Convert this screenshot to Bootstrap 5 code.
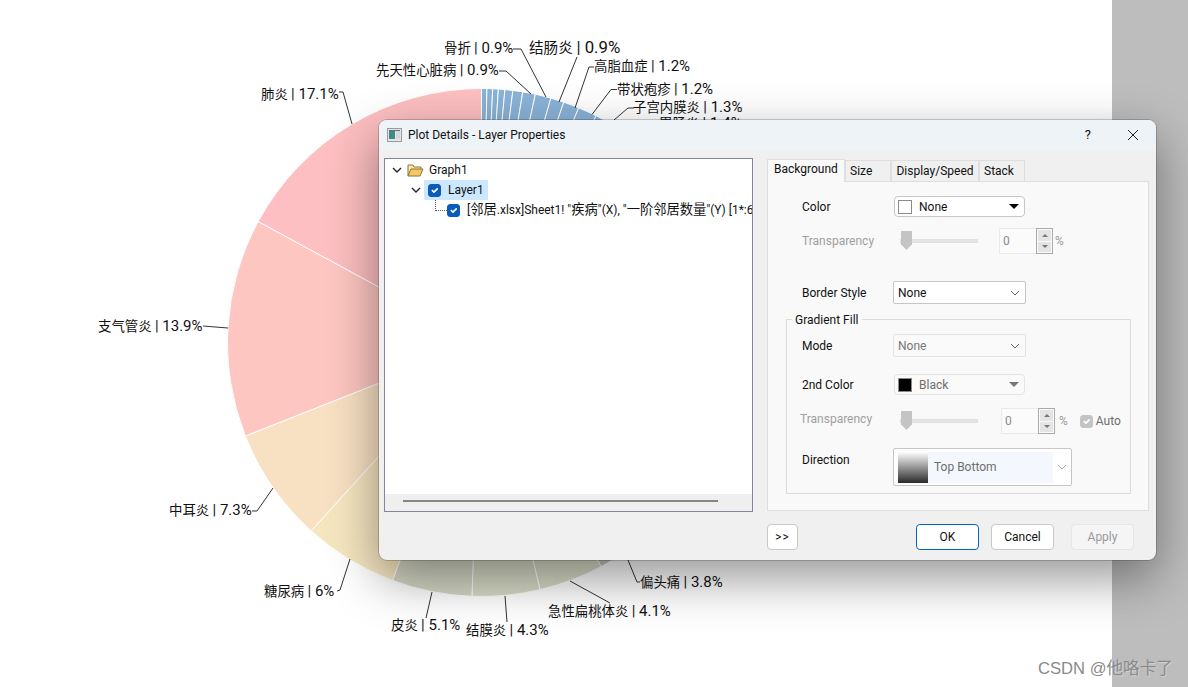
<!DOCTYPE html>
<html lang="zh-CN">
<head>
<meta charset="utf-8">
<title>Plot Details</title>
<link href="https://cdn.jsdelivr.net/npm/bootstrap@5.3.0/dist/css/bootstrap.min.css" rel="stylesheet">
<style>
html,body{height:687px;overflow:hidden;background:#fff}
body{font-family:Roboto,"Noto Sans CJK SC",sans-serif;font-size:12px;color:#111}
.stage{position:relative;width:1188px;height:687px;overflow:hidden}
.canvas{width:1112px;height:687px;flex:none}
.sideband{flex:1 1 auto;background:#bdbdbd}
.lbl{font-family:Roboto,"Noto Sans CJK SC",sans-serif;font-size:13.4px;fill:#111}
.lbl-big{font-size:14.6px}
.num{font-size:15px}
.num-big{font-size:16.8px}
.leader{stroke:#333;stroke-width:1;fill:none}
.watermark{position:absolute;left:1038px;top:659px;font-size:16.6px;line-height:20px;color:#8a8a8a;text-shadow:1px 1px 1px rgba(255,255,255,.35);font-family:"Liberation Sans","Noto Sans CJK SC",sans-serif}
.dlg{position:absolute;left:379px;top:120px;width:777px;height:440px;background:#f0f0f0;border-radius:8px;box-shadow:0 18px 50px rgba(0,0,0,.42),0 0 0 1px rgba(0,0,0,.18);overflow:hidden;display:flex;flex-direction:column}
.dlg-title{height:30px;background:#eef3f8;padding:0 17px 0 8px;flex:none}
.title-txt{font-size:12px;margin-left:6px}
.dlg-q{font-size:13px;margin-right:36px}
.dlg-body{padding:8px 7px 0 5px;gap:14px;height:361px;flex:none}
.tree{width:369px;height:354px;border:1px solid #84849a;background:#fff;overflow:hidden;flex:none}
.tree-items{padding-top:1px;height:335px}
.tree-row{height:20px;white-space:nowrap}
.r1{padding-left:7px}
.r2{padding-left:26px}
.r3{padding-left:50px}
.twist{width:10px;height:10px;flex:none}
.folder{width:17px;height:14px;margin-left:5px;flex:none}
.t-txt{margin-left:5px}
.sel{background:#cce8ff;height:20px;padding:0 4px 0 4px;margin-left:3px;border-radius:1px}
.dots{width:12px;height:11px;border-left:1px dotted #555;border-bottom:1px dotted #555;margin-top:-10px;flex:none}
.form-check-input.tk{width:13px;height:13px;margin:0;border-radius:3px;background-color:#0a5cb8;border-color:#0a5cb8;opacity:1;flex:none}
.t-lead{margin-left:7px}
.cjk{font-size:13.300px}
.tree-bar{height:17px;background:#efefef;padding:6px 34px 0 18px}
.tree-thumb{height:2px;background:#868686}
.tabs-col{width:382px;flex:none;padding-top:0}
.tabbar{border:0;gap:0;height:23px;align-items:flex-end;padding-left:0;flex-wrap:nowrap}
.tabbar .nav-link{font-size:12px;line-height:14px;color:#111;border:1px solid #dedede;border-bottom:0;border-radius:0;background:#f0f0f0;height:21px;padding:3px 4px 0;margin:0;white-space:nowrap}
.tabbar .nav-link.active{height:23px;background:#f9f9f9;padding:2px 6px 0;border-color:#dedede;color:#111;margin-bottom:-1px;position:relative}
.tw1{width:78px}.tw2{width:46px}.tw3{width:88px;text-align:center}.tw4{width:46px}
.tab-panel{height:330px;background:#f9f9f9;border:1px solid #dedede;padding:14px 0 0 0}
.frow{display:flex;align-items:center}
.flabel{width:126px;flex:none;padding-left:34px}
.flabel-in{width:107px;flex:none;padding-left:15px}
.off{color:#a0a0a0}
.combo{width:131px;height:21px;border:1px solid #c6c6c6;border-radius:4px;background:#fff;padding:0 3px;flex:none}
.combo-off{background:#fafafa;border-color:#e4e4e4;color:#6e6e6e}
.swatch{width:14px;height:14px;border:1px solid #8a8a8a;background:#fff;flex:none;margin-right:7px}
.sw-black{background:#000}
.caret-d{width:0;height:0;border-left:5px solid transparent;border-right:5px solid transparent;border-top:5px solid #000;margin-left:auto;margin-right:2px}
.caret-off{border-top-color:#777}
.slidebox{width:78px;height:20px;position:relative;flex:none;margin-left:6px;display:flex;align-items:center}
.s-track{height:4px;width:100%;background:#e4e6e4;border:1px solid #e0e0e0}
.s-thumb{position:absolute;left:1px;top:0;width:11px;height:19px;background:#c4c4c4;clip-path:polygon(0 0,100% 0,100% 70%,50% 100%,0 70%)}
.spin{width:54px;height:26px;border:1px solid #eaeaea;background:#fbfbfb;flex:none;margin-left:21px;padding-left:3px;color:#8b8b8b;display:flex;align-items:center;justify-content:space-between;padding-right:0}
.spin-btns{width:17px;height:26px;border:1px solid #aaa;display:flex;flex-direction:column;gap:1px;padding:1px;margin-right:-1px}
.spin-btns span{flex:1;background:#e4e4e4;display:flex;align-items:center;justify-content:center}
.up{width:0;height:0;border-left:3px solid transparent;border-right:3px solid transparent;border-bottom:3px solid #777}
.dn{width:0;height:0;border-left:3px solid transparent;border-right:3px solid transparent;border-top:3px solid #777}
.pct{margin-left:2px;color:#9a9a9a;font-size:12px}
.mt-a{margin-top:11px}
.mt-b{margin-top:27px}
.sel-d{width:133px;height:23px;min-height:23px;font-size:12px;line-height:14px;padding:0 4px;border:1px solid #c6c6c6;border-radius:2px;color:#111;background-color:#fff;margin-left:-1px;background-position:right 4px center;background-size:12px 10px;background-image:url("data:image/svg+xml,%3csvg xmlns='http://www.w3.org/2000/svg' viewBox='0 0 12 10'%3e%3cpath fill='none' stroke='%23666' d='M2 3l4 4 4-4'/%3e%3c/svg%3e")}
.sel-d:disabled{background-color:#fafafa;border-color:#e4e4e4;color:#777}
.gbox{position:relative;margin:15px 0 0 18px;width:345px;height:175px;border:1px solid #dcdcdc;padding-top:14px}
.gleg{position:absolute;left:5px;top:-7px;background:#f9f9f9;padding:0 3px;line-height:15px}
.mt-c{margin-top:17px}
.mt-d{margin-top:13px}
.mt-e{margin-top:14px}
.gslide{margin-left:6px}
.in-tr{width:107px;flex:none;padding-left:13px;padding-bottom:5px}
.in-spin{margin-left:23px}
.in-pct{margin-left:4px;margin-right:12px}
.form-check-input.tk-off{width:13px;height:13px;margin:0 3px 0 0;border-radius:3px;background-color:#c4c4c4;border-color:#c4c4c4;opacity:1;flex:none}
.auto-t{color:#6e6e6e}
.dirbox{width:179px;height:38px;border:1px solid #c6c6c6;border-radius:2px;background:#fff;padding:3px 0 3px 4px;margin-left:-1px;flex:none;color:#6e6e6e}
.grad{width:30px;height:31px;background:linear-gradient(#fff,#2a2a2a);flex:none}
.dir-t{flex:1;background:#f4f7fd;height:31px;padding-left:6px;display:flex;align-items:center;margin-right:0}
.dir-c{width:18px;height:10px;flex:none}
.dir-lab{align-self:flex-start;padding-top:3px}
.dlg-foot{padding:13px 22px 0 388px;flex:none}
.bt{font-size:12px;line-height:14px;height:26px;width:63px;padding:0;border-radius:4px;background:#fff;border:1px solid #c8c8c8;color:#111;display:inline-flex;align-items:center;justify-content:center}
.bt-more{width:31px;letter-spacing:1px}
.bt-ok{border-color:#0067c0}
.bt-gap{margin-left:auto}
.bt-can{margin-left:12px}
.btn.bt-app:disabled{margin-left:17px;background:#f5f5f5;border-color:#e6e6e6;color:#9a9a9a;opacity:1}
</style>
</head>
<body>
<div class="stage d-flex">
  <svg class="canvas" viewBox="0 0 1112 687" xmlns="http://www.w3.org/2000/svg">
    <g id="pie" stroke="#fff" stroke-width="1"></g>
    <g>
      <path class="leader" d="M339 92h4l9 32"/><text class="lbl" x="261" y="99">肺炎 <tspan class="num">| 17.1%</tspan></text>
      <path class="leader" d="M203 326l25 2"/><text class="lbl" x="98" y="331">支气管炎 <tspan class="num">| 13.9%</tspan></text>
      <path class="leader" d="M252 511h5l16-23"/><text class="lbl" x="169" y="515">中耳炎 <tspan class="num">| 7.3%</tspan></text>
      <path class="leader" d="M337 591l3-1 10-31"/><text class="lbl" x="264" y="596">糖尿病 <tspan class="num">| 6%</tspan></text>
      <path class="leader" d="M426 618l6-26"/><text class="lbl" x="391" y="630">皮炎 <tspan class="num">| 5.1%</tspan></text>
      <path class="leader" d="M507 622l-2-26"/><text class="lbl" x="466" y="635">结膜炎 <tspan class="num">| 4.3%</tspan></text>
      <path class="leader" d="M610 603l-40-22"/><text class="lbl" x="548" y="616">急性扁桃体炎 <tspan class="num">| 4.1%</tspan></text>
      <path class="leader" d="M640 582h-3l-9-22"/><text class="lbl" x="640" y="587">偏头痛 <tspan class="num">| 3.8%</tspan></text>
      <path class="leader" d="M513 49h8l25 48"/><text class="lbl" x="444" y="53">骨折 <tspan class="num">| 0.9%</tspan></text>
      <path class="leader" d="M577 57l-18 45"/><text class="lbl lbl-big" x="529" y="53">结肠炎 <tspan class="num-big">| 0.9%</tspan></text>
      <path class="leader" d="M499 71h7l25 23"/><text class="lbl" x="376" y="75">先天性心脏病 <tspan class="num">| 0.9%</tspan></text>
      <path class="leader" d="M594 67h-5l-14 41"/><text class="lbl" x="594" y="71">高脂血症 <tspan class="num">| 1.2%</tspan></text>
      <path class="leader" d="M617 89.500h-6l-19 25"/><text class="lbl" x="617" y="94">带状疱疹 <tspan class="num">| 1.2%</tspan></text>
      <path class="leader" d="M634 108h-6l-14 12"/><text class="lbl" x="633" y="112">子宫内膜炎 <tspan class="num">| 1.3%</tspan></text>
      <text class="lbl" x="659" y="128">胃肠炎 <tspan class="num">| 1.4%</tspan></text>
    </g>
  </svg>
  <div class="sideband"></div>

  <div class="dlg">
    <div class="dlg-title d-flex align-items-center">
      <svg width="15" height="14" viewBox="0 0 15 14"><rect x=".5" y=".5" width="14" height="13" fill="#e6e6e6" stroke="#9a9a9a"/><rect x="2" y="3" width="6" height="8" fill="#3e8a84"/><rect x="9" y="3" width="4" height="8" fill="#d6d6d6"/><rect x="2" y="2" width="11" height="1" fill="#607080"/></svg>
      <span class="title-txt">Plot Details - Layer Properties</span>
      <span class="dlg-q ms-auto">?</span>
      <svg width="12" height="12" viewBox="0 0 12 12"><path d="M1 1l10 10M11 1L1 11" stroke="#222" fill="none"/></svg>
    </div>
    <div class="dlg-body d-flex">
      <div class="tree d-flex flex-column">
        <div class="tree-items">
          <div class="tree-row r1 d-flex align-items-center">
            <svg class="twist" viewBox="0 0 10 10"><path d="M1 3l4 4 4-4" fill="none" stroke="#222" stroke-width="1.400"/></svg>
            <svg class="folder" viewBox="0 0 17 14"><path d="M1 13V2h5l1 2h7v2" fill="#fbe9a8" stroke="#8a7440"/><path d="M1 13l3-7h12l-3 7z" fill="#f6c95c" stroke="#8a7440"/></svg>
            <span class="t-txt">Graph1</span>
          </div>
          <div class="tree-row r2 d-flex align-items-center">
            <svg class="twist" viewBox="0 0 10 10"><path d="M1 3l4 4 4-4" fill="none" stroke="#222" stroke-width="1.400"/></svg>
            <div class="sel d-flex align-items-center">
              <input class="form-check-input tk" type="checkbox" checked aria-label="Layer1"><span class="t-lead">Layer1</span>
            </div>
          </div>
          <div class="tree-row r3 d-flex align-items-center">
            <div class="dots"></div>
            <input class="form-check-input tk" type="checkbox" checked aria-label="data"><span class="t-lead">[<span class="cjk">邻居</span>.xlsx]Sheet1! "<span class="cjk">疾病</span>"(X), "<span class="cjk">一阶邻居数量</span>"(Y) [1*:6</span>
          </div>
        </div>
        <div class="tree-bar"><div class="tree-thumb"></div></div>
      </div>
      <div class="tabs-col">
        <ul class="nav nav-tabs tabbar">
          <li class="nav-item"><a class="nav-link active tw1" href="#">Background</a></li>
          <li class="nav-item"><a class="nav-link tw2" href="#">Size</a></li>
          <li class="nav-item"><a class="nav-link tw3" href="#">Display/Speed</a></li>
          <li class="nav-item"><a class="nav-link tw4" href="#">Stack</a></li>
        </ul>
        <div class="tab-panel">
          <div class="frow">
            <div class="flabel">Color</div>
            <div class="combo d-flex align-items-center"><span class="swatch"></span><span>None</span><span class="caret-d"></span></div>
          </div>
          <div class="frow mt-a">
            <div class="flabel off">Transparency</div>
            <div class="slidebox"><div class="s-track"></div><div class="s-thumb"></div></div>
            <div class="spin"><span>0</span><div class="spin-btns"><span><i class="up"></i></span><span><i class="dn"></i></span></div></div>
            <span class="pct">%</span>
          </div>
          <div class="frow mt-b">
            <div class="flabel">Border Style</div>
            <select class="form-select sel-d" aria-label="Border Style"><option>None</option></select>
          </div>
          <div class="gbox">
            <div class="gleg">Gradient Fill</div>
            <div class="frow">
              <div class="flabel-in">Mode</div>
              <select class="form-select sel-d" disabled aria-label="Mode"><option>None</option></select>
            </div>
            <div class="frow mt-c">
              <div class="flabel-in">2nd Color</div>
              <div class="combo combo-off d-flex align-items-center"><span class="swatch sw-black"></span><span>Black</span><span class="caret-d caret-off"></span></div>
            </div>
            <div class="frow mt-d">
              <div class="in-tr off">Transparency</div>
              <div class="slidebox gslide"><div class="s-track"></div><div class="s-thumb"></div></div>
              <div class="spin in-spin"><span>0</span><div class="spin-btns"><span><i class="up"></i></span><span><i class="dn"></i></span></div></div>
              <span class="pct in-pct">%</span>
              <input class="form-check-input tk-off" type="checkbox" checked disabled aria-label="Auto"><span class="auto-t">Auto</span>
            </div>
            <div class="frow mt-e">
              <div class="flabel-in dir-lab">Direction</div>
              <div class="dirbox d-flex align-items-center">
                <div class="grad"></div><div class="dir-t">Top Bottom</div>
                <svg class="dir-c" viewBox="0 0 18 10"><path d="M5 3l4 4 4-4" fill="none" stroke="#aaa"/></svg>
              </div>
            </div>
          </div>
        </div>
      </div>
    </div>
    <div class="dlg-foot d-flex">
      <button type="button" class="btn bt bt-more">&gt;&gt;</button>
      <button type="button" class="btn bt bt-ok bt-gap">OK</button>
      <button type="button" class="btn bt bt-can">Cancel</button>
      <button type="button" class="btn bt bt-app" disabled>Apply</button>
    </div>
  </div>

  <div class="watermark">CSDN @他咯卡了</div>
</div>
<script>
(function(){
  var cx=481.5,cy=342.5,r=254;
  var cum=[0,.34,.7,1.06,1.47,1.97,2.6,3.4,4.4,5.25,6.25,7.45,8.75,10.15,14,19,25,31,38.4];
  var items=[];
  for(var i=0;i<cum.length-1;i++)items.push([cum[i],cum[i+1],'#8ab3d8']);
  var rest=[[38.4,'#c0c8c0'],[42.2,'#d9dcc8'],[46.3,'#d8dbc8'],[50.6,'#d6d8c6'],[55.7,'#f6e6c0'],[61.7,'#f8e0c2'],[69,'#fdc6c0'],[82.9,'#fdbfc1'],[100,null]];
  for(var j=0;j<rest.length-1;j++)items.push([rest[j][0],rest[j+1][0],rest[j][1]]);
  var g=document.getElementById('pie'),h='';
  items.forEach(function(s){
    var a=s[0]*Math.PI/50,b=s[1]*Math.PI/50;
    var x1=cx+r*Math.sin(a),y1=cy-r*Math.cos(a),x2=cx+r*Math.sin(b),y2=cy-r*Math.cos(b);
    h+='<path fill="'+s[2]+'" d="M'+cx+' '+cy+'L'+x1.toFixed(2)+' '+y1.toFixed(2)+'A'+r+' '+r+' 0 '+((s[1]-s[0])>50?1:0)+' 1 '+x2.toFixed(2)+' '+y2.toFixed(2)+'Z"/>';
  });
  g.innerHTML=h;
})();
</script>
<script src="https://cdn.jsdelivr.net/npm/bootstrap@5.3.0/dist/js/bootstrap.bundle.min.js"></script>
</body>
</html>
